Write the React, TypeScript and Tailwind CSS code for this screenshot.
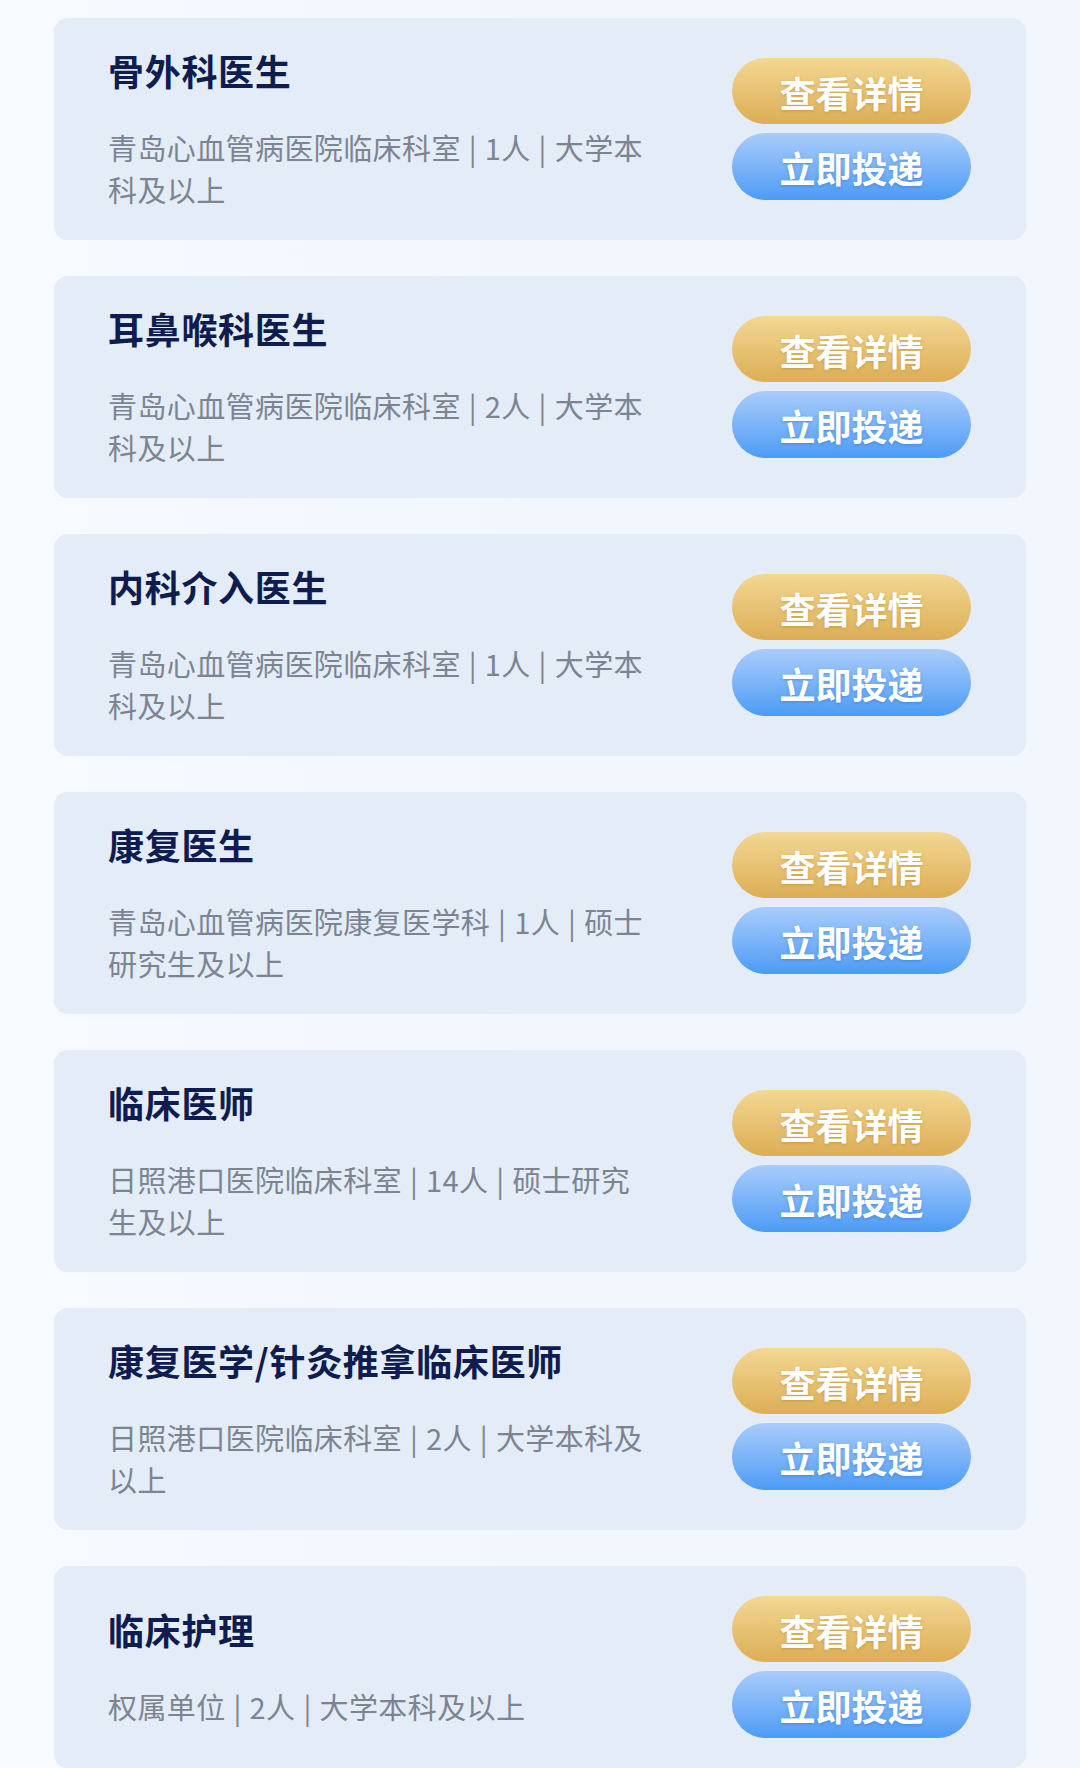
import React from "react";

type Job = { title: string; desc: string };

const jobs: Job[] = [
  { title: "骨外科医生", desc: "青岛心血管病医院临床科室 | 1人 | 大学本科及以上" },
  { title: "耳鼻喉科医生", desc: "青岛心血管病医院临床科室 | 2人 | 大学本科及以上" },
  { title: "内科介入医生", desc: "青岛心血管病医院临床科室 | 1人 | 大学本科及以上" },
  { title: "康复医生", desc: "青岛心血管病医院康复医学科 | 1人 | 硕士研究生及以上" },
  { title: "临床医师", desc: "日照港口医院临床科室 | 14人 | 硕士研究生及以上" },
  { title: "康复医学/针灸推拿临床医师", desc: "日照港口医院临床科室 | 2人 | 大学本科及以上" },
  { title: "临床护理", desc: "权属单位 | 2人 | 大学本科及以上" },
];

const font = { fontFamily: '"Noto Sans CJK SC", "Noto Sans", sans-serif' };

function Card({ job }: { job: Job }) {
  return (
    <div className="flex items-center justify-between rounded-[14px] bg-[#e4ecf8] py-[30px] pl-[54px] pr-[55px]">
      <div className="flex w-[545px] flex-col">
        <div className="text-[36px] font-bold leading-[44px] tracking-[0.7px] text-[#0e1c4f]">{job.title}</div>
        <div className="mt-[34px] text-[29px] leading-[42px] tracking-[0.4px] [word-spacing:1px] text-[#7c8491]">
          {job.desc}
        </div>
      </div>
      <div className="flex w-[239px] flex-col gap-[9px]">
        <div className="flex h-[66px] items-center justify-center rounded-full bg-gradient-to-b from-[#f3d792] to-[#dcae55] pt-[1px] text-[36px] font-bold leading-none text-white [text-shadow:0_1px_3px_rgba(150,100,20,0.35)]">
          查看详情
        </div>
        <div className="flex h-[67px] items-center justify-center rounded-full bg-gradient-to-b from-[#a9ccfb] to-[#4a9bf5] pt-[1px] text-[36px] font-bold leading-none text-white [text-shadow:0_1px_3px_rgba(20,80,170,0.35)]">
          立即投递
        </div>
      </div>
    </div>
  );
}

export default function App() {
  return (
    <div
      className="min-h-[1768px] w-[1080px] bg-gradient-to-r from-[#f7faff] via-[#f2f7fe] to-[#f2f7fe] px-[54px] pt-[18px]"
      style={font}
    >
      <div className="flex flex-col gap-[36px]">
        {jobs.map((j) => (
          <Card key={j.title} job={j} />
        ))}
      </div>
    </div>
  );
}
